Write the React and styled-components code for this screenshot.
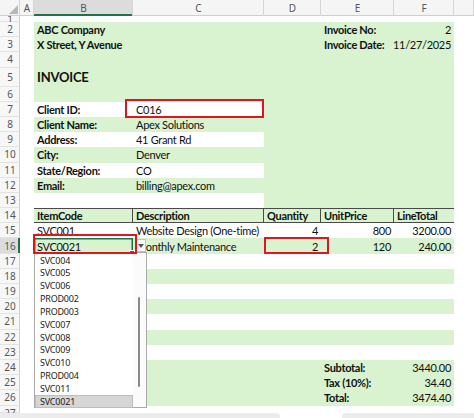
import styled, { createGlobalStyle } from "styled-components";

const GREEN = "#d9f2d0";
const EDGE = "#9fd08a";
const RH = 15.2;

const GlobalStyle = createGlobalStyle`
  html, body { margin: 0; padding: 0; background: #fff; }
  body {
    width: 474px;
    height: 418px;
    overflow: hidden;
    font-family: "Lato", "Liberation Sans", sans-serif;
  }
`;

const colLetters = [
  { w: 14, l: "A" },
  { w: 99, l: "B", sel: true },
  { w: 131, l: "C" },
  { w: 57, l: "D" },
  { w: 73, l: "E" },
  { w: 60, l: "F" },
];

// rows 2..26 of the invoice block
const rows = [
  { n: 2, cells: [{ t: "ABC Company", b: 1 }, {}, {}, { t: "Invoice No:", b: 1 }, { t: "2", r: 1 }] },
  { n: 3, cells: [{ t: "X Street, Y Avenue", b: 1 }, {}, {}, { t: "Invoice Date:", b: 1 }, { t: "11/27/2025", r: 1 }] },
  { n: 4 },
  { n: 5, h: 19, cells: [{ t: "INVOICE", b: 1, big: 1 }] },
  { n: 6 },
  { n: 7, white: 2, cells: [{ t: "Client ID:", b: 1 }, { t: "C016" }] },
  { n: 8, cells: [{ t: "Client Name:", b: 1 }, { t: "Apex Solutions" }] },
  { n: 9, white: 2, cells: [{ t: "Address:", b: 1 }, { t: "41 Grant Rd" }] },
  { n: 10, cells: [{ t: "City:", b: 1 }, { t: "Denver" }] },
  { n: 11, white: 2, cells: [{ t: "State/Region:", b: 1 }, { t: "CO" }] },
  { n: 12, cells: [{ t: "Email:", b: 1 }, { t: "billing@apex.com" }] },
  { n: 13, white: 2 },
  {
    n: 14,
    head: true,
    cells: [
      { t: "ItemCode", b: 1 },
      { t: "Description", b: 1 },
      { t: "Quantity", b: 1 },
      { t: "UnitPrice", b: 1 },
      { t: "LineTotal", b: 1 },
    ],
  },
  {
    n: 15,
    white: 5,
    cells: [{ t: "SVC001" }, { t: "Website Design (One-time)" }, { t: "4", r: 1 }, { t: "800", r: 1 }, { t: "3200.00", r: 1 }],
  },
  {
    n: 16,
    active: true,
    cells: [{ t: "SVC0021" }, { t: "Monthly Maintenance" }, { t: "2", r: 1 }, { t: "120", r: 1 }, { t: "240.00", r: 1 }],
  },
  { n: 17, white: 5 },
  { n: 18 },
  { n: 19, white: 5 },
  { n: 20 },
  { n: 21, white: 5 },
  { n: 22 },
  { n: 23, white: 5 },
  { n: 24, cells: [{}, {}, {}, { t: "Subtotal:", b: 1 }, { t: "3440.00", r: 1 }] },
  { n: 25, cells: [{}, {}, {}, { t: "Tax (10%):", b: 1 }, { t: "34.40", r: 1 }] },
  { n: 26, cells: [{}, {}, {}, { t: "Total:", b: 1 }, { t: "3474.40", r: 1 }] },
];

const listItems = [
  "SVC004",
  "SVC005",
  "SVC006",
  "PROD002",
  "PROD003",
  "SVC007",
  "SVC008",
  "SVC009",
  "SVC010",
  "PROD004",
  "SVC011",
  "SVC0021",
];

function App() {
  return (
    <>
      <GlobalStyle />
      <Sheet>
        <ColHeader>
          <Corner>
            <svg width="9" height="9" viewBox="0 0 9 9">
              <path d="M9 0 L9 9 L0 9 Z" fill="#b8b8b8" />
            </svg>
          </Corner>
          {colLetters.map((c) => (
            <ColLetter key={c.l} $w={c.w} $sel={c.sel}>
              {c.l}
            </ColLetter>
          ))}
          <ColLetter $grow />
        </ColHeader>

        <Body>
          <RowNums>
            <RowNum $h={6}>1</RowNum>
            {rows.map((r) => (
              <RowNum key={r.n} $h={r.h || RH} $sel={r.active}>
                {r.n}
              </RowNum>
            ))}
            <RowNum $h={7.2} $top>
              27
            </RowNum>
          </RowNums>

          <Grid>
            <Spacer $h={6} />
            <Middle>
              <ColA />
              <Invoice>
                {rows.map((r) => (
                  <Row key={r.n} $h={r.h || RH}>
                    {[0, 1, 2, 3, 4].map((i) => {
                      const c = (r.cells && r.cells[i]) || {};
                      const dropdown = r.active && i === 0;
                      return (
                        <Cell
                          key={i}
                          $white={r.white && i < r.white}
                          $bold={c.b}
                          $big={c.big}
                          $right={c.r}
                          $head={r.head}
                          $last={i === 4}
                          $active={dropdown}
                        >
                          {c.t}
                          {dropdown && (
                            <>
                              <Handle />
                              <DropButton>
                                <svg width="6" height="4" viewBox="0 0 6 4">
                                  <path d="M0 0 H6 L3 4 Z" fill="#555" />
                                </svg>
                              </DropButton>
                              <DropList>
                                <Items>
                                  {listItems.map((it, k) => (
                                    <Item key={it} $sel={k === listItems.length - 1}>
                                      {it}
                                    </Item>
                                  ))}
                                </Items>
                                <ScrollTrack>
                                  <Thumb />
                                </ScrollTrack>
                              </DropList>
                            </>
                          )}
                        </Cell>
                      );
                    })}
                  </Row>
                ))}
                <RedBox $x={91} $y={77} $w={139} $h={19} />
                <RedBox $x={-1} $y={212} $w={104} $h={20} />
                <RedBox $x={230} $y={215} $w={65} $h={17} />
              </Invoice>
              <ColG />
            </Middle>
            <Spacer $h={7.2} />
          </Grid>
        </Body>

        <BottomBar>
          <BarPiece $w={280} />
          <BarGap />
          <BarPiece $grow />
        </BottomBar>
      </Sheet>
    </>
  );
}

export default App;

const Sheet = styled.div`
  width: 474px;
  height: 418px;
  display: flex;
  flex-direction: column;
  overflow: hidden;
  background: #fff;
`;

const ColHeader = styled.div`
  display: flex;
  height: 16px;
  flex-shrink: 0;
  background: #f5f5f5;
  box-shadow: inset 0 -1px 0 #cfcfcf;
`;

const Corner = styled.div`
  width: 20px;
  display: flex;
  align-items: flex-end;
  justify-content: flex-end;
  padding: 0 2px 2px 0;
  box-sizing: border-box;
  box-shadow: inset -1px 0 0 #d6d6d6, inset 0 -1px 0 #cfcfcf;
`;

const ColLetter = styled.div`
  width: ${(p) => (p.$w ? `${p.$w}px` : "auto")};
  flex: ${(p) => (p.$grow ? 1 : "none")};
  display: flex;
  align-items: center;
  justify-content: center;
  font-family: "Noto Sans", "Open Sans", sans-serif;
  font-size: 10px;
  color: #555;
  background: ${(p) => (p.$sel ? "#dcdcdc" : "transparent")};
  box-shadow: inset -1px 0 0 #d6d6d6,
    ${(p) => (p.$sel ? "inset 0 -2px 0 #217346" : "inset 0 -1px 0 #cfcfcf")};
`;

const Body = styled.div`
  display: flex;
  flex-shrink: 0;
`;

const RowNums = styled.div`
  width: 20px;
  display: flex;
  flex-direction: column;
  background: #f7f7f7;
  box-shadow: inset -1px 0 0 #cfcfcf;
`;

const RowNum = styled.div`
  height: ${(p) => p.$h}px;
  overflow: hidden;
  display: flex;
  align-items: ${(p) => (p.$top ? "flex-start" : "center")};
  justify-content: center;
  line-height: 15px;
  font-family: "Noto Sans", "Open Sans", sans-serif;
  font-size: 10px;
  color: #555;
  background: ${(p) => (p.$sel ? "#dcdcdc" : "transparent")};
  box-shadow: inset 0 -1px 0 #e3e3e3,
    ${(p) => (p.$sel ? "inset -2px 0 0 #217346" : "inset -1px 0 0 #cfcfcf")};
`;

const Grid = styled.div`
  flex: 1;
  display: flex;
  flex-direction: column;
`;

const Spacer = styled.div`
  height: ${(p) => p.$h}px;
`;

const Middle = styled.div`
  display: flex;
`;

const ColA = styled.div`
  width: 14px;
`;

const ColG = styled.div`
  flex: 1;
`;

const Invoice = styled.div`
  position: relative;
  width: 420px;
  display: flex;
  flex-direction: column;
  outline: 1px solid ${EDGE};
  outline-offset: -1px;
`;

const Row = styled.div`
  display: grid;
  grid-template-columns: 99px 131px 57px 73px 60px;
  height: ${(p) => p.$h}px;
`;

const Cell = styled.div`
  position: relative;
  display: flex;
  align-items: center;
  justify-content: ${(p) => (p.$right ? "flex-end" : "flex-start")};
  padding: 0 3px;
  white-space: nowrap;
  background: ${(p) => (p.$white ? "#fff" : GREEN)};
  color: #111;
  font-size: ${(p) => (p.$big ? "13px" : "11px")};
  letter-spacing: ${(p) => (p.$big ? "-0.2px" : "-0.3px")};
  font-weight: ${(p) => (p.$bold ? 700 : 400)};
  box-shadow: ${(p) =>
    p.$active
      ? "inset 0 0 0 1.5px #217346"
      : p.$head
      ? `inset 0 1px 0 #4a4a4a, inset 0 -1px 0 #4a4a4a${p.$last ? "" : ", inset -1px 0 0 #4a4a4a"}`
      : "none"};
`;

const Handle = styled.span`
  position: absolute;
  right: -2px;
  bottom: -2px;
  width: 4px;
  height: 4px;
  background: #217346;
  border: 1px solid #fff;
  z-index: 3;
`;

const DropButton = styled.div`
  position: absolute;
  left: calc(100% + 2px);
  top: 1px;
  width: 11px;
  height: 13px;
  box-sizing: border-box;
  background: #f7f7f7;
  border: 1px solid #c4c4c4;
  display: flex;
  align-items: center;
  justify-content: center;
  z-index: 4;
`;

const DropList = styled.div`
  position: absolute;
  left: 0;
  top: calc(100% - 2px);
  width: 113px;
  height: 156px;
  box-sizing: border-box;
  background: #fff;
  border: 1px solid #a9a9a9;
  display: flex;
  z-index: 5;
  letter-spacing: 0;
`;

const Items = styled.div`
  flex: 1;
  display: flex;
  flex-direction: column;
  padding-top: 1px;
`;

const Item = styled.div`
  height: 12.85px;
  display: flex;
  align-items: center;
  padding-left: 5px;
  font-family: "Noto Sans", "Open Sans", sans-serif;
  font-size: 9px;
  letter-spacing: -0.2px;
  color: #222;
  background: ${(p) => (p.$sel ? "#d6d6d6" : "transparent")};
  box-shadow: ${(p) => (p.$sel ? "inset 0 0 0 1px #bdbdbd" : "none")};
`;

const ScrollTrack = styled.div`
  width: 13px;
  position: relative;
  background: #fbfbfb;
`;

const Thumb = styled.div`
  position: absolute;
  left: 5px;
  top: 44px;
  width: 2px;
  height: 90px;
  border-radius: 1px;
  background: #8a8a8a;
`;

const RedBox = styled.div`
  position: absolute;
  left: ${(p) => p.$x}px;
  top: ${(p) => p.$y}px;
  width: ${(p) => p.$w}px;
  height: ${(p) => p.$h}px;
  box-sizing: border-box;
  border: 2.5px solid #e0161e;
  z-index: 6;
  pointer-events: none;
`;

const BottomBar = styled.div`
  flex: 1;
  display: flex;
  background: #fff;
`;

const BarPiece = styled.div`
  width: ${(p) => (p.$w ? `${p.$w}px` : "auto")};
  flex: ${(p) => (p.$grow ? 1 : "none")};
  background: #ececec;
  border-radius: 0 4px 0 0;
  &:last-child {
    border-radius: 4px 0 0 0;
  }
`;

const BarGap = styled.div`
  width: 62px;
`;
